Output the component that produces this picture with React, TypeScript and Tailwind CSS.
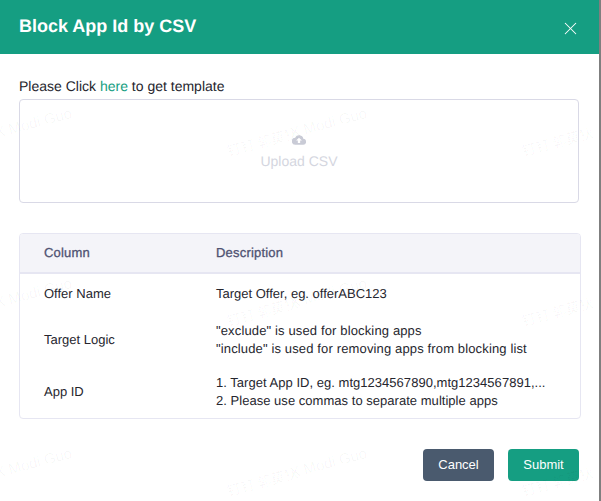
import { X } from 'lucide-react';

const rows = [
  { name: 'Offer Name', lines: ['Target Offer, eg. offerABC123'], height: 'h-[40px]', spacing: '' },
  {
    name: 'Target Logic',
    lines: ['"exclude" is used for blocking apps', '"include" is used for removing apps from blocking list'],
    height: 'h-[52px]',
    spacing: 'tracking-[0.14px]',
  },
  {
    name: 'App ID',
    lines: ['1. Target App ID, eg. mtg1234567890,mtg1234567891,...', '2. Please use commas to separate multiple apps'],
    height: 'h-[52px]',
    spacing: 'tracking-[0.03px]',
  },
];

const cjkMarks = [
  { left: 'left-[226px]', top: 'top-[132px]' },
  { left: 'left-[521px]', top: 'top-[132px]' },
  { left: 'left-[226px]', top: 'top-[302px]' },
  { left: 'left-[521px]', top: 'top-[302px]' },
  { left: 'left-[226px]', top: 'top-[472px]' },
  { left: 'left-[521px]', top: 'top-[472px]' },
];

const nameMarks = [
  { left: 'left-[-6px]', top: 'top-[114px]' },
  { left: 'left-[289px]', top: 'top-[114px]' },
  { left: 'left-[-6px]', top: 'top-[284px]' },
  { left: 'left-[289px]', top: 'top-[284px]' },
  { left: 'left-[-6px]', top: 'top-[454px]' },
  { left: 'left-[289px]', top: 'top-[454px]' },
];

function CloudUpload() {
  return (
    <svg viewBox="0 0 24 24" className="h-[14px] w-[14px] fill-[#c9cbd6]">
      <path d="M19.4 10A7.5 7.5 0 0 0 5.4 8 6 6 0 0 0 6 20h13a5 5 0 0 0 .4-10zM14 13v4h-4v-4H7l5-5 5 5h-3z" />
    </svg>
  );
}

export default function App() {
  return (
    <div className='relative h-[501px] w-[601px] overflow-hidden bg-white font-["Liberation_Sans",Arial,sans-serif] [text-rendering:geometricPrecision]'>
      <div className="flex h-full w-[599px] flex-col">
        <header className="flex h-[54px] shrink-0 justify-between bg-[#159e82] pl-[19px] pr-[18px]">
          <h2 className="pt-[14px] text-[18px] font-bold leading-[24px] text-white">Block App Id by CSV</h2>
          <button className="mt-[18px] h-[21px] text-white">
            <X size={21} strokeWidth={1.2} />
          </button>
        </header>

        <main className="flex flex-1 flex-col pl-[19px] pr-[20px] pt-[22px]">
          <p className="text-[14px] leading-[20px] text-[#26262e]">
            Please Click <a className="text-[#159e82]">here</a> to get template
          </p>
          <div className="mt-[3px] flex h-[104px] flex-col items-center rounded-[4px] border border-[#d9d9e6] pt-[33px]">
            <CloudUpload />
            <span className="mt-[4px] text-[14px] leading-[20px] text-[#d4d6e0]">Upload CSV</span>
          </div>

          <section className="mt-[30px] w-[562px] overflow-hidden rounded-[4px] border border-[#e6e6f2]">
            <div className="flex h-[40px] items-center border-b-2 border-[#e6e6f2] bg-[#f4f4f9] text-[13px] tracking-[0.2px] text-[#4f5272] [-webkit-text-stroke:0.3px_#4f5272]">
              <div className="w-[196px] pl-[24px]">Column</div>
              <div>Description</div>
            </div>
            {rows.map((row) => (
              <div key={row.name} className={`flex items-center text-[13px] leading-[18px] text-[#26262e] ${row.height}`}>
                <div className="w-[196px] shrink-0 pl-[24px]">{row.name}</div>
                <div className={row.spacing}>
                  {row.lines.map((line) => (
                    <div key={line}>{line}</div>
                  ))}
                </div>
              </div>
            ))}
          </section>

          <footer className="mt-[30px] flex justify-end gap-[14px]">
            <button className="h-[32px] w-[71px] rounded-[4px] bg-[#4a5a6e] text-[13px] text-white">Cancel</button>
            <button className="h-[32px] w-[71px] rounded-[4px] bg-[#159e82] text-[13px] text-white">Submit</button>
          </footer>
        </main>
      </div>

      <div className="absolute right-0 top-0 h-full w-[2px] bg-[#7f7f7f]" />

      {cjkMarks.map((mark) => (
        <span
          key={mark.left + mark.top}
          className={`pointer-events-none absolute -rotate-[15deg] whitespace-nowrap font-["Noto_Sans_CJK_SC",sans-serif] text-[14px] leading-[20px] text-[#000000]/[0.035] ${mark.left} ${mark.top}`}
        >
          钉钉 郭莫狄
        </span>
      ))}
      {nameMarks.map((mark) => (
        <span
          key={mark.left + mark.top}
          className={`pointer-events-none absolute -rotate-[15deg] whitespace-nowrap text-[15px] leading-[20px] text-[#000000]/[0.035] ${mark.left} ${mark.top}`}
        >
          X Modi Guo
        </span>
      ))}
    </div>
  );
}
